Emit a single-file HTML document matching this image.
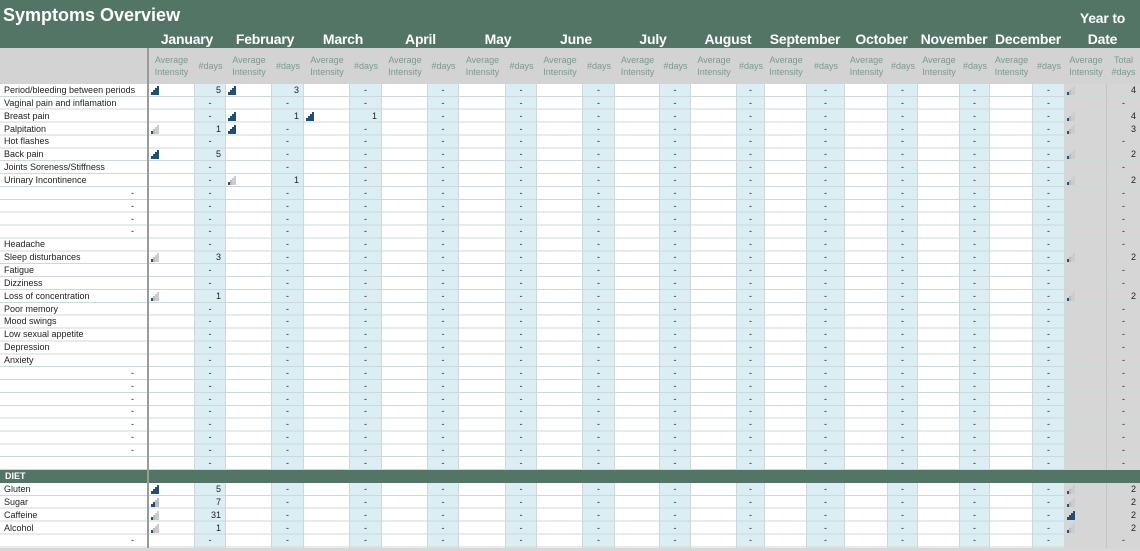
<!DOCTYPE html>
<html><head><meta charset="utf-8">
<style>
*{margin:0;padding:0;box-sizing:border-box}
body{width:1140px;height:551px;overflow:hidden;background:#fff;font-family:"Liberation Sans",sans-serif;position:relative}
.a{position:absolute}
#title{left:0;top:0;width:1140px;height:48px;background:#527565}
#title h1{position:absolute;left:3px;top:5px;font-size:18px;color:#fff;font-weight:bold}
.mo{position:absolute;top:31px;color:#fff;font-weight:bold;font-size:14px;text-align:center;letter-spacing:-0.2px}
#hdr{left:0;top:48px;width:1140px;height:36px;background:#d3d3d3}
.h{position:absolute;top:54px;color:#7b9a8d;font-size:9px;text-align:center;line-height:12px}
.col{position:absolute;font-size:9px;color:#222;line-height:12.87px;
 background-image:repeating-linear-gradient(to bottom,transparent 0,transparent 11.87px,#cdd8da 11.87px,#cdd8da 12.87px);border-right:1px solid #cdd8da}
.w{background-color:#fff}
.d{background-color:#dbeef3}
.g{background-color:#d6d6d6;border-right-color:#c4c4c4}
.col i{display:block;height:12.87px;text-align:center;font-style:normal}
.col b{display:block;height:12.87px;text-align:right;padding-right:4px;font-weight:normal}
.lab i{text-align:left;padding-left:4px}
.lab b{padding-right:14px}
.up{top:84px;height:386px}
.lo{top:483px;height:65px}
#diet{left:0;top:470px;width:1140px;height:13px;background:#527565;color:#fff;font-size:9px;font-weight:bold;padding-left:5px;line-height:13px}
#sep{left:147px;top:48px;width:2px;height:500px;background:#9a9a9a}
#bot{left:0;top:548px;width:1140px;height:3px;background:#d8d8d8}
.ic{position:absolute;width:8px;height:9px;z-index:2}
</style></head><body>
<svg width="0" height="0" style="position:absolute">
<defs>
<g id="f"><rect x="0" y="6" width="2" height="3" fill="#1f4e79"/><rect x="2" y="4" width="2" height="5" fill="#1f4e79"/><rect x="4" y="2" width="2" height="7" fill="#1f4e79"/><rect x="6" y="0" width="2" height="9" fill="#1f4e79"/></g>
<g id="p"><rect x="0" y="6" width="2" height="3" fill="#1f4e79"/><rect x="2" y="4" width="2" height="5" fill="#1f4e79"/><rect x="4" y="2" width="2" height="7" fill="#bbb"/><rect x="6" y="0" width="2" height="9" fill="#bbb"/></g>
<g id="e"><rect x="0" y="6" width="2" height="3" fill="#2d4f73"/><rect x="2" y="4" width="2" height="5" fill="#bbb"/><rect x="4" y="2" width="2" height="7" fill="#ccc"/><rect x="6" y="0" width="2" height="9" fill="#ccc"/></g>
</defs></svg>

<div id="title" class="a"><h1>Symptoms Overview</h1>
<div class="mo" style="left:148px;width:78px">January</div>
<div class="mo" style="left:226px;width:78px">February</div>
<div class="mo" style="left:304px;width:78px">March</div>
<div class="mo" style="left:382px;width:77px">April</div>
<div class="mo" style="left:459px;width:78px">May</div>
<div class="mo" style="left:537px;width:78px">June</div>
<div class="mo" style="left:615px;width:76px">July</div>
<div class="mo" style="left:691px;width:74px">August</div>
<div class="mo" style="left:765px;width:80px">September</div>
<div class="mo" style="left:845px;width:73px">October</div>
<div class="mo" style="left:916px;width:76px">November</div>
<div class="mo" style="left:991px;width:74px">December</div>
<div class="mo" style="left:1065px;width:75px;top:8px;line-height:21px">Year to<br>Date</div>
</div>
<div id="hdr" class="a"></div>
<div class="h" style="left:148px;width:47px">Average<br>Intensity</div><div class="h" style="left:195px;width:31px;top:60px">#days</div>
<div class="h" style="left:226px;width:46px">Average<br>Intensity</div><div class="h" style="left:272px;width:32px;top:60px">#days</div>
<div class="h" style="left:304px;width:46px">Average<br>Intensity</div><div class="h" style="left:350px;width:32px;top:60px">#days</div>
<div class="h" style="left:382px;width:46px">Average<br>Intensity</div><div class="h" style="left:428px;width:31px;top:60px">#days</div>
<div class="h" style="left:459px;width:47px">Average<br>Intensity</div><div class="h" style="left:506px;width:31px;top:60px">#days</div>
<div class="h" style="left:537px;width:46px">Average<br>Intensity</div><div class="h" style="left:583px;width:32px;top:60px">#days</div>
<div class="h" style="left:615px;width:45px">Average<br>Intensity</div><div class="h" style="left:660px;width:31px;top:60px">#days</div>
<div class="h" style="left:691px;width:46px">Average<br>Intensity</div><div class="h" style="left:737px;width:28px;top:60px">#days</div>
<div class="h" style="left:765px;width:42px">Average<br>Intensity</div><div class="h" style="left:807px;width:38px;top:60px">#days</div>
<div class="h" style="left:845px;width:43px">Average<br>Intensity</div><div class="h" style="left:888px;width:30px;top:60px">#days</div>
<div class="h" style="left:918px;width:42px">Average<br>Intensity</div><div class="h" style="left:960px;width:30px;top:60px">#days</div>
<div class="h" style="left:990px;width:43px">Average<br>Intensity</div><div class="h" style="left:1033px;width:32px;top:60px">#days</div>
<div class="h" style="left:1065px;width:42px">Average<br>Intensity</div><div class="h" style="left:1107px;width:33px;">Total<br>#days</div>

<div class="col w lab up" style="left:0;width:148px;border-right:none"><i>Period/bleeding between periods</i><i>Vaginal pain and inflamation</i><i>Breast pain</i><i>Palpitation</i><i>Hot flashes</i><i>Back pain</i><i>Joints Soreness/Stiffness</i><i>Urinary Incontinence</i><b>-</b><b>-</b><b>-</b><b>-</b><i>Headache</i><i>Sleep disturbances</i><i>Fatigue</i><i>Dizziness</i><i>Loss of concentration</i><i>Poor memory</i><i>Mood swings</i><i>Low sexual appetite</i><i>Depression</i><i>Anxiety</i><b>-</b><b>-</b><b>-</b><b>-</b><b>-</b><b>-</b><b>-</b><b></b></div>
<div class="col w lab lo" style="left:0;width:148px;border-right:none"><i>Gluten</i><i>Sugar</i><i>Caffeine</i><i>Alcohol</i><b>-</b></div>

<div class="col w up" style="left:149px;width:46px"></div>
<div class="col d up" style="left:195px;width:31px"><b>5</b><i>-</i><i>-</i><b>1</b><i>-</i><b>5</b><i>-</i><i>-</i><i>-</i><i>-</i><i>-</i><i>-</i><i>-</i><b>3</b><i>-</i><i>-</i><b>1</b><i>-</i><i>-</i><i>-</i><i>-</i><i>-</i><i>-</i><i>-</i><i>-</i><i>-</i><i>-</i><i>-</i><i>-</i><i>-</i></div>
<div class="col w lo" style="left:149px;width:46px"></div>
<div class="col d lo" style="left:195px;width:31px"><b>5</b><b>7</b><b>31</b><b>1</b><i>-</i></div>

<div class="col w up" style="left:226px;width:46px"></div>
<div class="col d up" style="left:272px;width:32px"><b>3</b><i>-</i><b>1</b><i>-</i><i>-</i><i>-</i><i>-</i><b>1</b><i>-</i><i>-</i><i>-</i><i>-</i><i>-</i><i>-</i><i>-</i><i>-</i><i>-</i><i>-</i><i>-</i><i>-</i><i>-</i><i>-</i><i>-</i><i>-</i><i>-</i><i>-</i><i>-</i><i>-</i><i>-</i><i>-</i></div>
<div class="col w lo" style="left:226px;width:46px"></div>
<div class="col d lo" style="left:272px;width:32px"><i>-</i><i>-</i><i>-</i><i>-</i><i>-</i></div>

<div class="col w up" style="left:304px;width:46px"></div>
<div class="col d up" style="left:350px;width:32px"><i>-</i><i>-</i><b>1</b><i>-</i><i>-</i><i>-</i><i>-</i><i>-</i><i>-</i><i>-</i><i>-</i><i>-</i><i>-</i><i>-</i><i>-</i><i>-</i><i>-</i><i>-</i><i>-</i><i>-</i><i>-</i><i>-</i><i>-</i><i>-</i><i>-</i><i>-</i><i>-</i><i>-</i><i>-</i><i>-</i></div>
<div class="col w lo" style="left:304px;width:46px"></div>
<div class="col d lo" style="left:350px;width:32px"><i>-</i><i>-</i><i>-</i><i>-</i><i>-</i></div>

<div class="col w up" style="left:382px;width:46px"></div><div class="col d up" style="left:428px;width:31px"><i>-</i><i>-</i><i>-</i><i>-</i><i>-</i><i>-</i><i>-</i><i>-</i><i>-</i><i>-</i><i>-</i><i>-</i><i>-</i><i>-</i><i>-</i><i>-</i><i>-</i><i>-</i><i>-</i><i>-</i><i>-</i><i>-</i><i>-</i><i>-</i><i>-</i><i>-</i><i>-</i><i>-</i><i>-</i><i>-</i></div>
<div class="col w lo" style="left:382px;width:46px"></div><div class="col d lo" style="left:428px;width:31px"><i>-</i><i>-</i><i>-</i><i>-</i><i>-</i></div>

<div class="col w up" style="left:459px;width:47px"></div><div class="col d up" style="left:506px;width:31px"><i>-</i><i>-</i><i>-</i><i>-</i><i>-</i><i>-</i><i>-</i><i>-</i><i>-</i><i>-</i><i>-</i><i>-</i><i>-</i><i>-</i><i>-</i><i>-</i><i>-</i><i>-</i><i>-</i><i>-</i><i>-</i><i>-</i><i>-</i><i>-</i><i>-</i><i>-</i><i>-</i><i>-</i><i>-</i><i>-</i></div>
<div class="col w lo" style="left:459px;width:47px"></div><div class="col d lo" style="left:506px;width:31px"><i>-</i><i>-</i><i>-</i><i>-</i><i>-</i></div>

<div class="col w up" style="left:537px;width:46px"></div><div class="col d up" style="left:583px;width:32px"><i>-</i><i>-</i><i>-</i><i>-</i><i>-</i><i>-</i><i>-</i><i>-</i><i>-</i><i>-</i><i>-</i><i>-</i><i>-</i><i>-</i><i>-</i><i>-</i><i>-</i><i>-</i><i>-</i><i>-</i><i>-</i><i>-</i><i>-</i><i>-</i><i>-</i><i>-</i><i>-</i><i>-</i><i>-</i><i>-</i></div>
<div class="col w lo" style="left:537px;width:46px"></div><div class="col d lo" style="left:583px;width:32px"><i>-</i><i>-</i><i>-</i><i>-</i><i>-</i></div>

<div class="col w up" style="left:615px;width:45px"></div><div class="col d up" style="left:660px;width:31px"><i>-</i><i>-</i><i>-</i><i>-</i><i>-</i><i>-</i><i>-</i><i>-</i><i>-</i><i>-</i><i>-</i><i>-</i><i>-</i><i>-</i><i>-</i><i>-</i><i>-</i><i>-</i><i>-</i><i>-</i><i>-</i><i>-</i><i>-</i><i>-</i><i>-</i><i>-</i><i>-</i><i>-</i><i>-</i><i>-</i></div>
<div class="col w lo" style="left:615px;width:45px"></div><div class="col d lo" style="left:660px;width:31px"><i>-</i><i>-</i><i>-</i><i>-</i><i>-</i></div>

<div class="col w up" style="left:691px;width:46px"></div><div class="col d up" style="left:737px;width:28px"><i>-</i><i>-</i><i>-</i><i>-</i><i>-</i><i>-</i><i>-</i><i>-</i><i>-</i><i>-</i><i>-</i><i>-</i><i>-</i><i>-</i><i>-</i><i>-</i><i>-</i><i>-</i><i>-</i><i>-</i><i>-</i><i>-</i><i>-</i><i>-</i><i>-</i><i>-</i><i>-</i><i>-</i><i>-</i><i>-</i></div>
<div class="col w lo" style="left:691px;width:46px"></div><div class="col d lo" style="left:737px;width:28px"><i>-</i><i>-</i><i>-</i><i>-</i><i>-</i></div>

<div class="col w up" style="left:765px;width:42px"></div><div class="col d up" style="left:807px;width:38px"><i>-</i><i>-</i><i>-</i><i>-</i><i>-</i><i>-</i><i>-</i><i>-</i><i>-</i><i>-</i><i>-</i><i>-</i><i>-</i><i>-</i><i>-</i><i>-</i><i>-</i><i>-</i><i>-</i><i>-</i><i>-</i><i>-</i><i>-</i><i>-</i><i>-</i><i>-</i><i>-</i><i>-</i><i>-</i><i>-</i></div>
<div class="col w lo" style="left:765px;width:42px"></div><div class="col d lo" style="left:807px;width:38px"><i>-</i><i>-</i><i>-</i><i>-</i><i>-</i></div>

<div class="col w up" style="left:845px;width:43px"></div><div class="col d up" style="left:888px;width:30px"><i>-</i><i>-</i><i>-</i><i>-</i><i>-</i><i>-</i><i>-</i><i>-</i><i>-</i><i>-</i><i>-</i><i>-</i><i>-</i><i>-</i><i>-</i><i>-</i><i>-</i><i>-</i><i>-</i><i>-</i><i>-</i><i>-</i><i>-</i><i>-</i><i>-</i><i>-</i><i>-</i><i>-</i><i>-</i><i>-</i></div>
<div class="col w lo" style="left:845px;width:43px"></div><div class="col d lo" style="left:888px;width:30px"><i>-</i><i>-</i><i>-</i><i>-</i><i>-</i></div>

<div class="col w up" style="left:918px;width:42px"></div><div class="col d up" style="left:960px;width:30px"><i>-</i><i>-</i><i>-</i><i>-</i><i>-</i><i>-</i><i>-</i><i>-</i><i>-</i><i>-</i><i>-</i><i>-</i><i>-</i><i>-</i><i>-</i><i>-</i><i>-</i><i>-</i><i>-</i><i>-</i><i>-</i><i>-</i><i>-</i><i>-</i><i>-</i><i>-</i><i>-</i><i>-</i><i>-</i><i>-</i></div>
<div class="col w lo" style="left:918px;width:42px"></div><div class="col d lo" style="left:960px;width:30px"><i>-</i><i>-</i><i>-</i><i>-</i><i>-</i></div>

<div class="col w up" style="left:990px;width:43px"></div><div class="col d up" style="left:1033px;width:32px"><i>-</i><i>-</i><i>-</i><i>-</i><i>-</i><i>-</i><i>-</i><i>-</i><i>-</i><i>-</i><i>-</i><i>-</i><i>-</i><i>-</i><i>-</i><i>-</i><i>-</i><i>-</i><i>-</i><i>-</i><i>-</i><i>-</i><i>-</i><i>-</i><i>-</i><i>-</i><i>-</i><i>-</i><i>-</i><i>-</i></div>
<div class="col w lo" style="left:990px;width:43px"></div><div class="col d lo" style="left:1033px;width:32px"><i>-</i><i>-</i><i>-</i><i>-</i><i>-</i></div>

<div class="col g up" style="left:1065px;width:42px"></div>
<div class="col g up" style="left:1107px;width:33px;border-right:none"><b>4</b><i>-</i><b>4</b><b>3</b><i>-</i><b>2</b><i>-</i><b>2</b><i>-</i><i>-</i><i>-</i><i>-</i><i>-</i><b>2</b><i>-</i><i>-</i><b>2</b><i>-</i><i>-</i><i>-</i><i>-</i><i>-</i><i>-</i><i>-</i><i>-</i><i>-</i><i>-</i><i>-</i><i>-</i><i>-</i></div>
<div class="col g lo" style="left:1065px;width:42px"></div>
<div class="col g lo" style="left:1107px;width:33px;border-right:none"><b>2</b><b>2</b><b>2</b><b>2</b><i>-</i></div>

<div id="diet" class="a">DIET</div>
<div id="sep" class="a"></div>
<div id="bot" class="a"></div>

<!-- icons -->
<svg class="ic" style="left:151px;top:86px"><use href="#f"/></svg>
<svg class="ic" style="left:151px;top:125px"><use href="#e"/></svg>
<svg class="ic" style="left:151px;top:150px"><use href="#f"/></svg>
<svg class="ic" style="left:151px;top:253px"><use href="#e"/></svg>
<svg class="ic" style="left:151px;top:292px"><use href="#e"/></svg>
<svg class="ic" style="left:228px;top:86px"><use href="#f"/></svg>
<svg class="ic" style="left:228px;top:112px"><use href="#f"/></svg>
<svg class="ic" style="left:228px;top:125px"><use href="#f"/></svg>
<svg class="ic" style="left:228px;top:176px"><use href="#e"/></svg>
<svg class="ic" style="left:306px;top:112px"><use href="#f"/></svg>
<svg class="ic" style="left:1067px;top:86px"><use href="#e"/></svg>
<svg class="ic" style="left:1067px;top:112px"><use href="#e"/></svg>
<svg class="ic" style="left:1067px;top:125px"><use href="#e"/></svg>
<svg class="ic" style="left:1067px;top:150px"><use href="#e"/></svg>
<svg class="ic" style="left:1067px;top:176px"><use href="#e"/></svg>
<svg class="ic" style="left:1067px;top:253px"><use href="#e"/></svg>
<svg class="ic" style="left:1067px;top:292px"><use href="#e"/></svg>
<svg class="ic" style="left:151px;top:485px"><use href="#f"/></svg>
<svg class="ic" style="left:151px;top:498px"><use href="#p"/></svg>
<svg class="ic" style="left:151px;top:511px"><use href="#e"/></svg>
<svg class="ic" style="left:151px;top:524px"><use href="#e"/></svg>
<svg class="ic" style="left:1067px;top:485px"><use href="#e"/></svg>
<svg class="ic" style="left:1067px;top:498px"><use href="#e"/></svg>
<svg class="ic" style="left:1067px;top:511px"><use href="#f"/></svg>
<svg class="ic" style="left:1067px;top:524px"><use href="#e"/></svg>
</body></html>
